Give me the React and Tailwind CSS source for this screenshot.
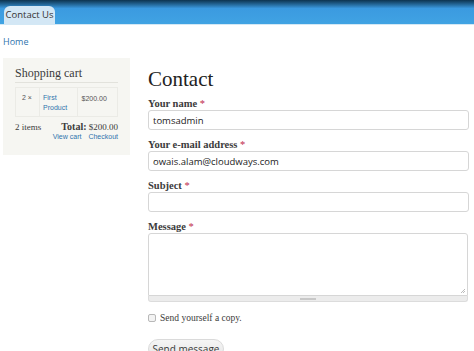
export default function App() {
  const serif = { fontFamily: '"Liberation Serif", Georgia, serif' };
  const sans = { fontFamily: '"Liberation Sans", sans-serif' };
  const label = 'block h-[10px] text-[10.5px] font-bold text-[#3b3b3b] leading-[10px] mb-[1px]';
  const input =
    'block w-[321px] h-[20px] border border-[#d6d6d6] rounded-[3px] bg-white px-[4px] text-[9.5px] text-[#222] outline-none';

  return (
    <div className="w-[474px] h-[351px] overflow-hidden bg-white" style={{ fontFamily: '"Open Sans", "Liberation Sans", sans-serif' }}>
      {/* header */}
      <div className="h-[25px] bg-gradient-to-b from-[#0d3450] via-[#3b9ae0] via-[35%] to-[#40a3e3] border-b border-[#d3e8f5] flex items-end pl-[4px]">
        <div className="h-[18px] w-[51px] rounded-t-[6px] bg-[#d3e7f5] flex items-center justify-center text-[9.5px] text-[#333]">
          Contact Us
        </div>
      </div>

      <div className="pl-[3px] pt-[11px] text-[9px] text-[#2f74ad] leading-[12px]">Home</div>

      <div className="flex mt-[10px] pl-[3px]">
        {/* sidebar */}
        <div className="w-[127px] h-[97px] bg-[#f6f6f2] px-[12px] pt-[8px]" style={serif}>
          <div className="text-[12px] leading-[14px] text-[#3b3b3b] pb-[2px] border-b border-[#e2e2dc]">Shopping cart</div>
          <table className="mt-[4px] w-[103px] text-[7px] border-collapse">
            <tbody>
              <tr className="align-top">
                <td className="border border-[#ebebe6] w-[24px] pl-[6px] pt-[5px] pb-[3px] text-[#555] leading-[10px]" style={sans}>2 ×</td>
                <td className="border border-[#ebebe6] pl-[3px] pt-[5px] pb-[3px] text-[#2f74ad] leading-[10px]" style={sans}>
                  First<br />Product
                </td>
                <td className="border border-[#ebebe6] pl-[4px] pt-[6px] text-[#555] leading-[10px]" style={sans}>$200.00</td>
              </tr>
            </tbody>
          </table>
          <div className="flex justify-between items-baseline mt-[5px] h-[10px] leading-[10px] text-[9px] text-[#3b3b3b]">
            <span>2 items</span>
            <span>
              <b className="text-[10px]">Total:</b> $200.00
            </span>
          </div>
          <div className="flex justify-end gap-[7px] text-[7px] leading-[8px] text-[#2f74ad] mt-[1px]" style={sans}>
            <span>View cart</span>
            <span>Checkout</span>
          </div>
        </div>

        {/* main */}
        <div className="ml-[18px]">
          <h1 className="text-[21px] text-[#222] leading-[21px] mt-[11px]" style={serif}>Contact</h1>

          <label className={`${label} mt-[9px]`} style={serif}>Your name <span className="text-[#c0284a] font-normal">*</span></label>
          <input className={input} defaultValue="tomsadmin" />

          <label className={`${label} mt-[10px]`} style={serif}>Your e-mail address <span className="text-[#c0284a] font-normal">*</span></label>
          <input className={input} defaultValue="owais.alam@cloudways.com" />

          <label className={`${label} mt-[10px]`} style={serif}>Subject <span className="text-[#c0284a] font-normal">*</span></label>
          <input className={input} defaultValue="" />

          <label className={`${label} mt-[10px]`} style={serif}>Message <span className="text-[#c0284a] font-normal">*</span></label>
          <div className="w-[320px]">
            <div className="h-[63px] border border-[#d6d6d6] rounded-t-[3px] bg-white relative">
              <svg className="absolute right-[1px] bottom-[1px]" width="6" height="6" viewBox="0 0 6 6">
                <path d="M5 1 L1 5 M5 3 L3 5" stroke="#aaa" strokeWidth="0.8" />
              </svg>
            </div>
            <div className="h-[6px] bg-[#ececec] border border-t-0 border-[#dcdcdc] rounded-b-[3px] flex justify-center items-center">
              <div className="w-[16px] h-[2px] bg-[#c8c8c8]" />
            </div>
          </div>

          <div className="flex items-center mt-[11px] h-[10px]">
            <div className="w-[8px] h-[8px] border border-[#b8b8b8] rounded-[2px] bg-[#f3f3f3]" />
            <span className="ml-[4px] text-[9.5px] text-[#3b3b3b]" style={serif}>Send yourself a copy.</span>
          </div>

          <div className="mt-[16px] w-[76px] h-[20px] rounded-[10px] border border-[#dadada] bg-gradient-to-b from-[#f5f5f5] to-[#e6e6e6] flex items-center justify-center text-[10px] text-[#3a3a3a]">
            Send message
          </div>
        </div>
      </div>
    </div>
  );
}
